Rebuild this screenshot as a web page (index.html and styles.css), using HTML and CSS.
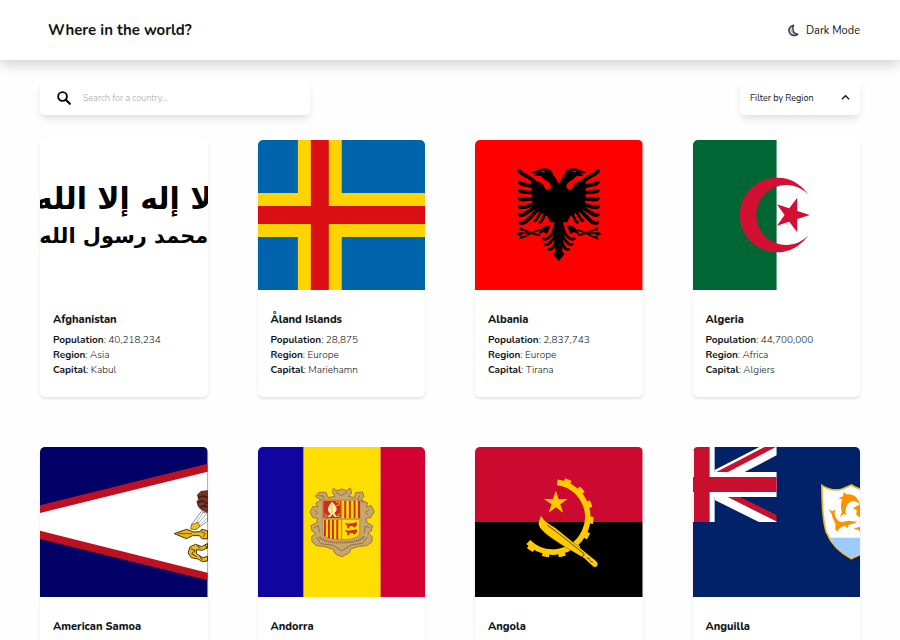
FILE: index.html
```
<!DOCTYPE html>
<html lang="en">
<head>
    <meta charset="UTF-8">
    <meta name="viewport" content="width=device-width, initial-scale=1.0">
    <title>Where in the world?</title>
    <link rel="stylesheet" href="styles.css">
</head>
<body>
    <header class="header">
        <h1 class="logo">Where in the world?</h1>
        <button class="theme-btn" type="button">
            <svg class="moon" viewBox="0 0 24 24" aria-hidden="true">
                <path d="M12 2C5 4 2 9 4 15C6 21 14 23 20 19C13 19 8 11 12 2Z" fill="#c0c8ce" stroke="#2b3945" stroke-width="2.600" stroke-linejoin="round"/>
            </svg>
            Dark Mode
        </button>
    </header>

    <main class="container">
        <form class="filters">
            <label class="search">
                <svg class="search-icon" viewBox="0 0 24 24" aria-hidden="true">
                    <circle cx="9.500" cy="9.500" r="7.500" fill="none" stroke="#000" stroke-width="3.200"/>
                    <path d="M15 15L22 22" stroke="#000" stroke-width="3.600" stroke-linecap="round"/>
                </svg>
                <input class="search-input" type="text" placeholder="Search for a country..." aria-label="Search for a country">
            </label>
            <button class="region-btn" type="button">
                Filter by Region
                <svg class="chevron" viewBox="0 0 10 10" aria-hidden="true">
                    <path d="M1 7L5 3L9 7" fill="none" stroke="#111517" stroke-width="1.400"/>
                </svg>
            </button>
        </form>

        <section class="countries">
            <article class="card">
                <svg class="flag" viewBox="0 0 168 150" preserveAspectRatio="none" role="img" aria-label="Flag of Afghanistan">
                    <rect width="168" height="150" fill="#fff"/>
                    <g class="script">
                        <text x="84" y="69" font-size="30">لا إله إلا الله</text>
                        <text x="84" y="103" font-size="21">محمد رسول الله</text>
                    </g>
                </svg>
                <div class="info">
                    <h2 class="name">Afghanistan</h2>
                    <p><b>Population</b>: 40,218,234</p>
                    <p><b>Region</b>: Asia</p>
                    <p><b>Capital</b>: Kabul</p>
                </div>
            </article>

            <article class="card">
                <svg class="flag" viewBox="0 0 168 150" preserveAspectRatio="none" role="img" aria-label="Flag of Åland Islands">
                    <rect width="168" height="150" fill="#0064ad"/>
                    <path d="M40 0H84V53H168V97H84V150H40V97H0V53H40Z" fill="#ffd300"/>
                    <path d="M53 0H71V66H168V84H71V150H53V84H0V66H53Z" fill="#da0e15"/>
                </svg>
                <div class="info">
                    <h2 class="name">Åland Islands</h2>
                    <p><b>Population</b>: 28,875</p>
                    <p><b>Region</b>: Europe</p>
                    <p><b>Capital</b>: Mariehamn</p>
                </div>
            </article>

            <article class="card">
                <svg class="flag" viewBox="15 15 503 450" preserveAspectRatio="none" role="img" aria-label="Flag of Albania">
                    <rect x="15" y="15" width="503" height="450" fill="#f00"/>
                    <g id="eagle">
                        <path d="M268 148C260 138 256 122 247 118L250 113L243 112L245 107C235 98 216 98 208 103L196 108C189 112 187 108 185 111C189 117 195 115 202 114C198 118 193 120 190 123C199 124 211 121 216 125C222 135 240 139 243 151C245 160 239 165 232 165C223 164 224 151 215 145C206 139 194 136 184 125L188 218C204 233 226 236 234 246L240 262L254 262L246 288L252 310L256 350L249 358L267 379Z"/>
                        <g fill="none" stroke="#000" stroke-width="11" stroke-linecap="round">
                            <path d="M148 107C158 123 174 120 194 140"/>
                            <path d="M149 142C160 153 174 146 196 158"/>
                            <path d="M149 167C160 176 174 168 196 175"/>
                            <path d="M149 191C160 199 174 190 196 191"/>
                            <path d="M149 215C160 222 176 212 197 207"/>
                            <path d="M149 239C162 245 174 228 200 215"/>
                            <path d="M151 263C167 269 179 247 203 225"/>
                        </g>
                        <g fill="none" stroke="#000" stroke-width="8" stroke-linecap="round">
                            <path d="M194 257C203 256 204 241 213 231"/>
                            <path d="M210 262C219 260 219 246 226 236"/>
                            <path d="M220 311C233 317 243 303 250 291"/>
                            <path d="M226 328C238 332 246 319 253 306"/>
                            <path d="M237 343C249 346 253 331 258 319"/>
                        </g>
                        <path d="M219 276L243 270L231 297L221 291L204 299Z"/>
                        <path d="M224 287C201 279 180 300 154 309M208 300C188 301 176 285 151 283M182 293L144 296" fill="none" stroke="#000" stroke-width="5" stroke-linecap="round"/>
                        <path d="M138 297L150 290L161 296L150 302ZM148 284L154 276L164 286ZM146 315L151 304L165 303Z"/>
                        <path d="M212 110C217 106 223 107 227 111L219 112Z" fill="#f00"/>
                    </g>
                    <use href="#eagle" transform="translate(533 0) scale(-1 1)"/>
                </svg>
                <div class="info">
                    <h2 class="name">Albania</h2>
                    <p><b>Population</b>: 2,837,743</p>
                    <p><b>Region</b>: Europe</p>
                    <p><b>Capital</b>: Tirana</p>
                </div>
            </article>

            <article class="card">
                <svg class="flag" viewBox="22 15 503 450" preserveAspectRatio="none" role="img" aria-label="Flag of Algeria">
                    <rect x="22" y="15" width="503" height="450" fill="#fff"/>
                    <rect x="22" y="15" width="251" height="450" fill="#006633"/>
                    <path d="M369 180A112 112 0 1 0 369 300A90 90 0 1 1 369 180Z" fill="#d21034"/>
                    <path d="M373 240L335 252L335 292L311 260L274 272L297 240L274 208L311 220L335 188L335 228Z" fill="#d21034"/>
                </svg>
                <div class="info">
                    <h2 class="name">Algeria</h2>
                    <p><b>Population</b>: 44,700,000</p>
                    <p><b>Region</b>: Africa</p>
                    <p><b>Capital</b>: Algiers</p>
                </div>
            </article>

            <article class="card">
                <svg class="flag" viewBox="30 22 503 450" preserveAspectRatio="none" role="img" aria-label="Flag of American Samoa">
                    <rect x="30" y="22" width="503" height="450" fill="#000066"/>
                    <path d="M30 197L533 72V422L30 298Z" fill="#bd1021"/>
                    <path d="M30 220L533 96V399L30 273Z" fill="#fff"/>
                    <path d="M533 153L514 155L503 165L506 180L501 186L506 202L516 211L533 219Z" fill="#7b3423" stroke="#351a12" stroke-width="2"/>
                    <path d="M505 174L520 168L533 174M503 189L518 183L533 192M511 203L524 197L533 203" fill="none" stroke="#351a12" stroke-width="4"/>
                    <path d="M514 216L484 256L496 270L533 245V221Z" fill="#fff" stroke="#555" stroke-width="2"/>
                    <path d="M520 219L497 252M529 223L506 250M533 234L512 255" stroke="#888" stroke-width="2"/>
                    <path d="M485 255L505 248L510 260L499 270L482 268Z" fill="#f0c020" stroke="#5a4010" stroke-width="2"/>
                    <path d="M433 282L470 269L492 277L511 276L515 269L533 273V298L516 297L509 288L488 288L470 297Z" fill="#e9b51c" stroke="#49320c" stroke-width="3"/>
                    <path d="M444 282L487 282M514 276L526 281L520 292" stroke="#49320c" stroke-width="2" fill="none"/>
                    <path d="M533 311L516 321L497 314L480 322L475 340L484 354L505 358L517 366L533 364V350L519 354L500 342V330L516 332L533 325Z" fill="#f0bb20" stroke="#49320c" stroke-width="3"/>
                    <path d="M483 327L496 333L485 342L501 351M502 317L511 327M510 350L517 361M526 317L531 326" stroke="#49320c" stroke-width="3" fill="none"/>
                </svg>
                <div class="info">
                    <h2 class="name">American Samoa</h2>
                    <p><b>Population</b>: 55,197</p>
                    <p><b>Region</b>: Oceania</p>
                    <p><b>Capital</b>: Pago Pago</p>
                </div>
            </article>

            <article class="card">
                <svg class="flag" viewBox="22 22 503 450" preserveAspectRatio="none" role="img" aria-label="Flag of Andorra">
                    <rect x="22" y="22" width="137" height="450" fill="#10069f"/>
                    <rect x="159" y="22" width="231" height="450" fill="#fedd00"/>
                    <rect x="390" y="22" width="136" height="450" fill="#d50032"/>
                    <path d="M248 146L260 153L274 148L288 153L299 145L303 160L294 170L312 174L315 159L335 157L340 170L332 181L351 190L347 202L362 198L371 216L360 234L346 236L350 250L366 258L362 274L352 280L365 291L364 307L348 318L325 320L302 327L294 341L274 351L255 343L247 329L224 321L198 318L184 306L183 291L196 281L184 274L181 258L198 249L201 236L187 234L178 217L187 200L201 202L196 190L211 181L194 170L205 158L226 158L233 174L253 170L246 158Z" fill="#c7a66b" stroke="#987444" stroke-width="3" stroke-linejoin="round"/>
                    <path d="M204 168L220 169L214 185M328 168L321 178L340 188M256 158L272 168L290 157M190 210L201 218L193 226M357 209L345 218L354 227M190 264L203 258L207 278M358 265L344 259L341 280M198 292L210 312L248 317L273 334L301 316L336 311L351 292" fill="none" stroke="#92713f" stroke-width="3"/>
                    <path d="M216 181H328V280Q325 300 273 300Q219 300 216 280Z" fill="#fedd00" stroke="#b49460" stroke-width="4"/>
                    <path d="M218 183H271V236H218Z" fill="#d52b1e"/>
                    <path d="M244 186Q222 212 240 222L230 232H239L246 223L252 232H260L251 221Q268 208 244 186Z" fill="#fff2b0"/>
                    <path d="M244 191V220M221 222L229 228L221 233M268 221L260 228L268 233M256 187H267V194L257 199" fill="none" stroke="#f3c400" stroke-width="3"/>
                    <path d="M284 183V236M298 183V236M312 183V236M325 183V236M223 240V290M235 240V296M247 240V298M260 240V299" stroke="#d52b1e" stroke-width="6"/>
                    <path d="M218 238H327M273 183V299" stroke="#b49460" stroke-width="4"/>
                    <path id="cow" d="M285 249L290 252L309 250L319 247V256L314 263H308L306 258L296 260V266H290V257L284 254Z" fill="#d52b1e"/>
                    <use href="#cow" y="21"/>
                    <path d="M207 292Q225 311 270 308Q323 310 342 290" fill="none" stroke="#80603b" stroke-width="6" stroke-dasharray="3 3"/>
                </svg>
                <div class="info">
                    <h2 class="name">Andorra</h2>
                    <p><b>Population</b>: 77,265</p>
                    <p><b>Region</b>: Europe</p>
                    <p><b>Capital</b>: Andorra la Vella</p>
                </div>
            </article>

            <article class="card">
                <svg class="flag" viewBox="15 22 503 450" preserveAspectRatio="none" role="img" aria-label="Flag of Angola">
                    <rect x="15" y="22" width="503" height="225" fill="#cc092f"/>
                    <rect x="15" y="247" width="503" height="225" fill="#000"/>
                    <path d="M262 128A105 105 0 1 1 175 307" fill="none" stroke="#ffcb00" stroke-width="17"/>
                    <path d="M263 121A112 112 0 1 1 170 311" fill="none" stroke="#ffcb00" stroke-width="19" stroke-dasharray="20 27" stroke-dashoffset="-20"/>
                    <path d="M258 153L266 178H293L271 194L280 219L258 203L236 219L245 194L222 178H249Z" fill="#ffcb00"/>
                    <path d="M214 226C220 244 239 253 257 265L378 363C389 371 383 387 370 381L343 356L282 320C257 302 225 285 210 264C202 251 207 240 214 226Z" fill="#ffcb00" stroke="#000" stroke-width="1"/>
                    <path d="M232 256L278 291L343 343L337 352M351 354L360 359M360 363L369 368" fill="none" stroke="#000" stroke-width="2"/>
                </svg>
                <div class="info">
                    <h2 class="name">Angola</h2>
                    <p><b>Population</b>: 32,866,268</p>
                    <p><b>Region</b>: Africa</p>
                    <p><b>Capital</b>: Luanda</p>
                </div>
            </article>

            <article class="card">
                <svg class="flag" viewBox="22 22 503 450" preserveAspectRatio="none" role="img" aria-label="Flag of Anguilla">
                    <rect x="22" y="22" width="503" height="450" fill="#012169"/>
                    <path d="M87 91L221 22H273V47L177 97H87ZM87 172H128L273 245V247H220L87 181Z" fill="#fff"/>
                    <path d="M22 22H87V97H273V172H87V247H22Z" fill="#fff"/>
                    <path d="M25 22H72V112H273V157H72V247H25V157H22V112H25ZM92 97L237 22H271L127 97ZM127 172H163L273 226V245Z" fill="#c8102e"/>
                    <path d="M409 137Q440 157 470 148Q484 142 498 136Q510 145 527 149V343L498 357Q443 329 422 277Q409 233 409 137Z" fill="#fff" stroke="#f0b323" stroke-width="5"/>
                    <path d="M433 294H525V341L498 354Q453 331 433 294Z" fill="#9bcbff"/>
                    <path d="M474 156L482 164Q508 160 518 182L522 192L508 184Q491 182 483 199L479 216L484 225L474 223L463 232L469 217Q463 196 470 179L459 176L473 169Z" fill="#ff9100"/>
                    <path d="M429 209L440 215L449 210L447 222Q451 243 468 248L488 243L516 246L503 252L490 255L486 265L477 258Q461 262 455 276L449 269Q453 252 443 239Q441 223 429 209Z" fill="#ff9100"/>
                    <path d="M502 206L525 193V233Q516 232 512 223L514 212ZM505 267L525 260V286L521 272Z" fill="#ff9100"/>
                </svg>
                <div class="info">
                    <h2 class="name">Anguilla</h2>
                    <p><b>Population</b>: 13,452</p>
                    <p><b>Region</b>: North America</p>
                    <p><b>Capital</b>: The Valley</p>
                </div>
            </article>
        </section>
    </main>
</body>
</html>
```
FILE: styles.css
```
* {
    margin: 0;
    padding: 0;
    box-sizing: border-box;
}

body {
    min-height: 100vh;
    font-family: Nunito, Lato, sans-serif;
    color: #111517;
    background-color: #fefefe;
}

button,
input {
    font-family: inherit;
    color: inherit;
    border: none;
    outline: none;
    background: none;
}

button {
    cursor: pointer;
}

.header {
    display: flex;
    justify-content: space-between;
    align-items: center;
    height: 60px;
    padding: 0 40px 0 48px;
    background: white;
    box-shadow: 0 5px 12px rgba(0, 0, 0, .17);
}

.logo {
    font-size: 15px;
    font-weight: 700;
}

.theme-btn {
    display: flex;
    align-items: center;
    gap: 6px;
    font-size: 11px;
}

.moon {
    width: 13px;
    height: 13px;
}

.container {
    padding: 20px 40px;
}

.filters {
    display: flex;
    justify-content: space-between;
    margin-bottom: 25px;
}

.search,
.region-btn {
    display: flex;
    align-items: center;
    height: 35px;
    background: white;
    border-radius: 5px;
    box-shadow: 0 5px 8px -2px rgba(0, 0, 0, .14);
}

.search {
    width: 270px;
    padding: 0 17px;
    gap: 12px;
}

.search-icon {
    width: 14px;
    height: 14px;
}

.search-input {
    flex: 1;
    min-width: 0;
    font-size: 9px;
    font-weight: 300;
}

.search-input::placeholder {
    color: #a4abb0;
}

.region-btn {
    width: 120px;
    padding: 0 10px;
    justify-content: space-between;
    font-size: 9px;
}

.chevron {
    width: 9px;
    height: 9px;
}

.countries {
    display: grid;
    grid-template-columns: repeat(4, 1fr);
    gap: 50px;
}

.card {
    background: white;
    border-radius: 5px;
    overflow: hidden;
    box-shadow: 0 2px 3px rgba(0, 0, 0, .1);
}

.flag {
    display: block;
    width: 100%;
    height: 150px;
}

.script {
    font-family: "DejaVu Sans", sans-serif;
    font-weight: 700;
    text-anchor: middle;
}

.info {
    padding: 20px 13px 19px;
    font-size: 10px;
    font-weight: 300;
    line-height: 15px;
}

.info b {
    font-weight: 700;
}

.name {
    margin-bottom: 4px;
    font-size: 11px;
    font-weight: 800;
    line-height: 19px;
}
```
